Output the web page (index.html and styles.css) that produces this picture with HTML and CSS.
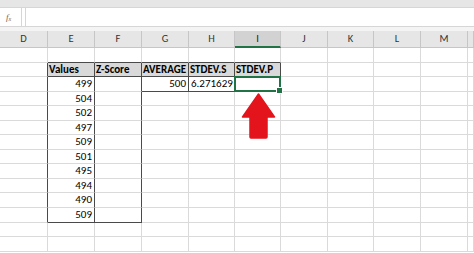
FILE: index.html
```html
<!DOCTYPE html>
<html lang="en">
<head>
  <meta charset="UTF-8" />
  <title>Sheet</title>
  <link rel="stylesheet" href="styles.css">
</head>
<body>
  <div class="ribbon-edge"></div>
  <div class="formula-bar">
    <div class="fx">f<sub>x</sub></div>
    <div class="formula-input"></div>
  </div>
  <div class="gap"></div>
  <div class="sheet">
    <!-- column headers -->
    <div class="col-head">D</div>
    <div class="col-head">E</div>
    <div class="col-head">F</div>
    <div class="col-head">G</div>
    <div class="col-head">H</div>
    <div class="col-head active">I</div>
    <div class="col-head">J</div>
    <div class="col-head">K</div>
    <div class="col-head">L</div>
    <div class="col-head">M</div>
    <div class="col-head"></div>

    <!-- row 1 -->
    <div class="cell"></div>
    <div class="cell bb"></div>
    <div class="cell bb"></div>
    <div class="cell bb"></div>
    <div class="cell bb"></div>
    <div class="cell bb"></div>
    <div class="cell"></div><div class="cell"></div><div class="cell"></div><div class="cell"></div><div class="cell"></div>

    <!-- row 2: headers -->
    <div class="cell br"></div>
    <div class="cell th br bb">Values</div>
    <div class="cell th br bb">Z-Score</div>
    <div class="cell th br bb">AVERAGE</div>
    <div class="cell th br bb">STDEV.S</div>
    <div class="cell th br bb">STDEV.P</div>
    <div class="cell"></div><div class="cell"></div><div class="cell"></div><div class="cell"></div><div class="cell"></div>

    <!-- row 3 -->
    <div class="cell br"></div>
    <div class="cell num br">499</div>
    <div class="cell br"></div>
    <div class="cell num br bb">500</div>
    <div class="cell num br bb">6.271629</div>
    <div class="cell selected"></div>
    <div class="cell"></div><div class="cell"></div><div class="cell"></div><div class="cell"></div><div class="cell"></div>

    <div class="cell br"></div><div class="cell num br">504</div><div class="cell br"></div>
    <div class="cell"></div><div class="cell"></div><div class="cell"></div><div class="cell"></div><div class="cell"></div><div class="cell"></div><div class="cell"></div><div class="cell"></div>

    <div class="cell br"></div><div class="cell num br">502</div><div class="cell br"></div>
    <div class="cell"></div><div class="cell"></div><div class="cell"></div><div class="cell"></div><div class="cell"></div><div class="cell"></div><div class="cell"></div><div class="cell"></div>

    <div class="cell br"></div><div class="cell num br">497</div><div class="cell br"></div>
    <div class="cell"></div><div class="cell"></div><div class="cell"></div><div class="cell"></div><div class="cell"></div><div class="cell"></div><div class="cell"></div><div class="cell"></div>

    <div class="cell br"></div><div class="cell num br">509</div><div class="cell br"></div>
    <div class="cell"></div><div class="cell"></div><div class="cell"></div><div class="cell"></div><div class="cell"></div><div class="cell"></div><div class="cell"></div><div class="cell"></div>

    <div class="cell br"></div><div class="cell num br">501</div><div class="cell br"></div>
    <div class="cell"></div><div class="cell"></div><div class="cell"></div><div class="cell"></div><div class="cell"></div><div class="cell"></div><div class="cell"></div><div class="cell"></div>

    <div class="cell br"></div><div class="cell num br">495</div><div class="cell br"></div>
    <div class="cell"></div><div class="cell"></div><div class="cell"></div><div class="cell"></div><div class="cell"></div><div class="cell"></div><div class="cell"></div><div class="cell"></div>

    <div class="cell br"></div><div class="cell num br">494</div><div class="cell br"></div>
    <div class="cell"></div><div class="cell"></div><div class="cell"></div><div class="cell"></div><div class="cell"></div><div class="cell"></div><div class="cell"></div><div class="cell"></div>

    <div class="cell br"></div><div class="cell num br">490</div><div class="cell br"></div>
    <div class="cell"></div><div class="cell"></div><div class="cell"></div><div class="cell"></div><div class="cell"></div><div class="cell"></div><div class="cell"></div><div class="cell"></div>

    <div class="cell br"></div><div class="cell num br bb">509</div><div class="cell br bb"></div>
    <div class="cell"></div><div class="cell"></div><div class="cell"></div><div class="cell"></div><div class="cell"></div><div class="cell"></div><div class="cell"></div><div class="cell"></div>

    <!-- empty rows -->
    <div class="cell"></div><div class="cell"></div><div class="cell"></div><div class="cell"></div><div class="cell"></div><div class="cell"></div><div class="cell"></div><div class="cell"></div><div class="cell"></div><div class="cell"></div><div class="cell"></div>
    <div class="cell"></div><div class="cell"></div><div class="cell"></div><div class="cell"></div><div class="cell"></div><div class="cell"></div><div class="cell"></div><div class="cell"></div><div class="cell"></div><div class="cell"></div><div class="cell"></div>

    <!-- red arrow pointing at the selected cell -->
    <svg class="arrow" width="35" height="46" viewBox="0 0 35 46">
      <path d="M17.5 1 L33.5 24 L26 24 L26 44 Q26 45 25 45 L10 45 Q9 45 9 44 L9 24 L1.5 24 Z" fill="#e3141b" stroke="#e3141b" stroke-width="1.5" stroke-linejoin="round"/>
    </svg>
  </div>
</body>
</html>
```

FILE: styles.css
```css
/* Global Styles */
body {
  margin: 0;
  padding: 0;
  background-color: #fff;
  font-family: Carlito, "Liberation Sans", Arial, sans-serif;
  color: #000;
  overflow: hidden;
}
.ribbon-edge {
  height: 7px;
  background-color: #e6e6e6;
}
.formula-bar {
  display: flex;
  height: 18px;
  border-top: 1px solid #d6d6d6;
  border-bottom: 1px solid #d6d6d6;
  background-color: #fff;
}
.fx {
  width: 22px;
  border-right: 1px solid #d6d6d6;
  font-family: "Liberation Serif", serif;
  font-style: italic;
  font-size: 9px;
  color: #666;
  line-height: 18px;
  padding-left: 6px;
  box-sizing: border-box;
}
.fx sub {
  font-size: 6px;
  vertical-align: -1px;
}
.formula-input {
  flex: 1;
  margin-left: 3px;
  border-left: 1px solid #d6d6d6;
}
.gap {
  height: 4px;
  background-color: #f4f4f4;
}
.sheet {
  position: relative;
  display: grid;
  grid-template-columns: 48px 47px 47px 47px 46px 46px 47px 46px 47px 47px 1fr;
  grid-template-rows: 17px;
  grid-auto-rows: 14.55px;
}
.col-head {
  background-color: #e6e6e6;
  border-right: 1px solid #c6c6c6;
  border-bottom: 1px solid #c6c6c6;
  font-size: 10.5px;
  color: #333;
  text-align: center;
  line-height: 16px;
  box-sizing: border-box;
}
.col-head.active {
  background-color: #d2d2d2;
  color: #222;
  border-bottom: 2px solid #217346;
}
.cell {
  border-right: 1px solid #dadada;
  border-bottom: 1px solid #dadada;
  box-sizing: border-box;
  font-size: 11px;
  line-height: 13px;
  padding: 0 2px;
  white-space: nowrap;
  overflow: visible;
}
.cell.br {
  border-right-color: #4a4a4a;
}
.cell.bb {
  border-bottom-color: #4a4a4a;
}
.cell.th {
  background-color: #d9d9d9;
  font-weight: bold;
  padding: 0 1px;
}
.cell.num {
  text-align: right;
}
.cell.selected {
  position: relative;
  border-right-color: #4a4a4a;
}
.cell.selected::after {
  content: "";
  position: absolute;
  left: -1px;
  top: -1px;
  right: -1px;
  bottom: -1px;
  border: 2px solid #217346;
}
.cell.selected::before {
  content: "";
  position: absolute;
  right: -3px;
  bottom: -3px;
  width: 5px;
  height: 5px;
  background-color: #217346;
  border: 1px solid #fff;
  z-index: 1;
}
.arrow {
  position: absolute;
  left: 241px;
  top: 62px;
}
```
